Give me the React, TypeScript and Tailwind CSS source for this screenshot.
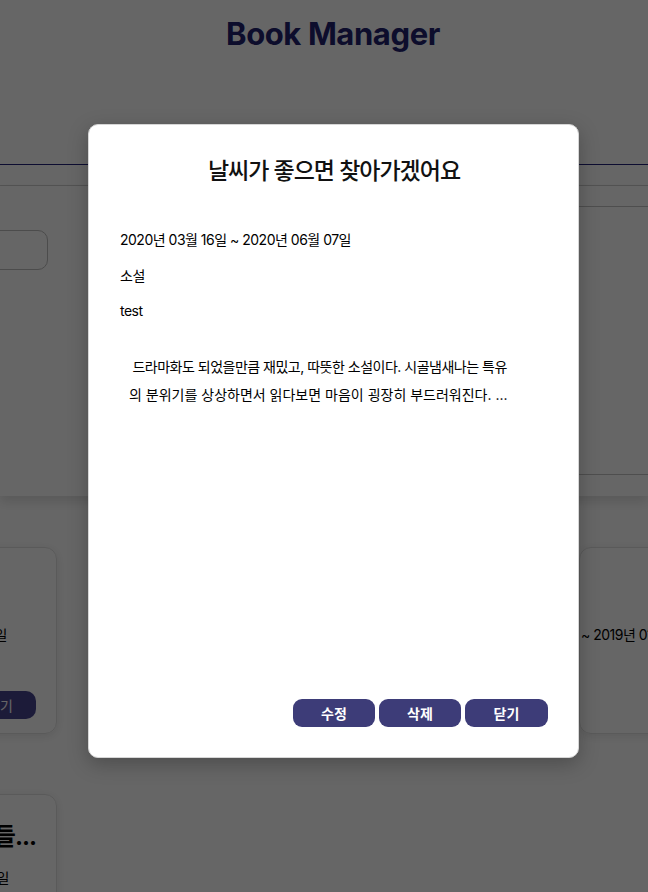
import React from "react";

const font = { fontFamily: 'Inter, "Noto Sans CJK KR", sans-serif' };

export default function App() {
  return (
    <div className="relative w-[648px] h-[892px] overflow-hidden bg-white text-black" style={font}>
      {/* background page */}
      <header className="h-[165px] border-b border-[#22227a] flex justify-center">
        <h1 className="mt-[16px] ml-[18px] text-[31px] leading-[36px] font-bold tracking-[-0.4px] text-[#22226e]">
          Book Manager
        </h1>
      </header>
      <div className="h-[21px] border-b border-[#d0d0d0]" />
      <section className="h-[310px] shadow-[0_6px_10px_rgba(0,0,0,0.12)] flex justify-between">
        <div className="pt-[44px]">
          <div className="w-[300px] h-[40px] -ml-[252px] rounded-[10px] border border-[#bdbdbd]" />
        </div>
        <div className="pt-[20px]">
          <div className="w-[200px] h-[269px] -mr-[131px] border-y border-[#c4c4c4]" />
        </div>
      </section>

      <div className="-mx-[200px] mt-[51px] flex justify-between">
        <div className="w-[257px] h-[187px] rounded-[12px] border border-[#e2e2e2] shadow-[0_2px_10px_rgba(0,0,0,0.1)] flex flex-col items-end">
          <div className="mt-[76px] mr-[49px] text-[14px] tracking-[-0.5px] whitespace-nowrap">
            2020년 03월 16일 ~ 2020년 06월 07일
          </div>
          <button className="mt-[46px] mr-[20px] h-[28px] w-[72px] rounded-[10px] bg-[#464590] text-white text-[14px]">
            열기
          </button>
        </div>
        <div className="w-[260px]" />
        <div className="w-[269px] h-[187px] rounded-[12px] border border-[#e2e2e2] shadow-[0_2px_10px_rgba(0,0,0,0.1)]">
          <div className="mt-[76px] -ml-[103px] text-[14px] tracking-[-0.5px] whitespace-nowrap">
            2019년 11월 02일 ~ 2019년 01월 12일
          </div>
        </div>
      </div>
      <div className="-mx-[200px] mt-[60px] flex">
        <div className="w-[257px] h-[200px] rounded-[12px] border border-[#e2e2e2] shadow-[0_2px_10px_rgba(0,0,0,0.1)] flex flex-col items-end">
          <div className="mt-[24px] mr-[20px] text-[24px] font-bold tracking-[-1px] whitespace-nowrap">
            우리가 사랑했던 것들...
          </div>
          <div className="mt-[12px] mr-[47px] text-[14px] tracking-[-0.5px] whitespace-nowrap">
            2019년 11월 02일
          </div>
        </div>
      </div>

      {/* overlay */}
      <div className="absolute inset-0 bg-black/60" />

      {/* modal */}
      <div className="absolute left-[88px] top-[124px] w-[491px] h-[634px] rounded-[10px] bg-white border border-[#d6d6d6] shadow-[0_6px_20px_rgba(0,0,0,0.25)] flex flex-col pl-[31px] pr-[30px] pt-[30px] pb-[30px]">
        <h2 className="text-center text-[23px] leading-[32px] font-medium tracking-[-1px] text-[#111]">
          날씨가 좋으면 찾아가겠어요
        </h2>
        <div className="mt-[43px] flex flex-col gap-[15.5px] text-[14px] leading-[20px] tracking-[-0.5px]">
          <p>2020년 03월 16일 ~ 2020년 06월 07일</p>
          <p>소설</p>
          <p>test</p>
        </div>
        <p className="mt-[32px] pl-[9px] text-[14px] leading-[28px] tracking-[-0.5px] whitespace-nowrap">
          {"\u00a0드라마화도 되었을만큼 재밌고, 따뜻한 소설이다. 시골냄새나는 특유"}
          <br />
          <span className="tracking-[0px]">의 분위기를 상상하면서 읽다보면 마음이 굉장히 부드러워진다. ...</span>
        </p>
        <div className="mt-auto flex justify-end gap-[4px]">
          <button className="w-[82px] h-[28px] rounded-[9px] bg-[#3d3c78] text-white text-[14px] font-semibold">수정</button>
          <button className="w-[82px] h-[28px] rounded-[9px] bg-[#3d3c78] text-white text-[14px] font-semibold">삭제</button>
          <button className="w-[83px] h-[28px] rounded-[9px] bg-[#3d3c78] text-white text-[14px] font-semibold">닫기</button>
        </div>
      </div>
    </div>
  );
}
